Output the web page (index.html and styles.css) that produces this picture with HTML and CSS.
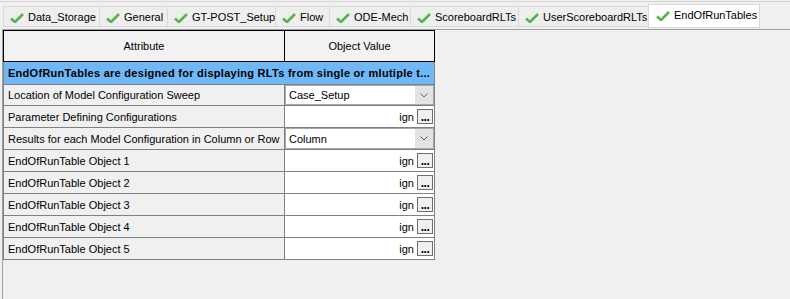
FILE: index.html
```html
<!DOCTYPE html>
<html>
<head>
<meta charset="utf-8">
<link rel="stylesheet" href="styles.css">
</head>
<body>
<div class="topline"></div>
<div class="tabs">
  <div class="tab" style="width:96px"><svg class="chk" viewBox="0 0 14 10"><path d="M1 5.5 L5 9 L13 1" /></svg><span>Data_Storage</span></div>
  <div class="tab" style="width:68px"><svg class="chk" viewBox="0 0 14 10"><path d="M1 5.5 L5 9 L13 1" /></svg><span>General</span></div>
  <div class="tab" style="width:108px"><svg class="chk" viewBox="0 0 14 10"><path d="M1 5.5 L5 9 L13 1" /></svg><span>GT-POST_Setup</span></div>
  <div class="tab" style="width:54px"><svg class="chk" viewBox="0 0 14 10"><path d="M1 5.5 L5 9 L13 1" /></svg><span>Flow</span></div>
  <div class="tab" style="width:81px"><svg class="chk" viewBox="0 0 14 10"><path d="M1 5.5 L5 9 L13 1" /></svg><span>ODE-Mech</span></div>
  <div class="tab" style="width:108px"><svg class="chk" viewBox="0 0 14 10"><path d="M1 5.5 L5 9 L13 1" /></svg><span>ScoreboardRLTs</span></div>
  <div class="tab" style="width:130px"><svg class="chk" viewBox="0 0 14 10"><path d="M1 5.5 L5 9 L13 1" /></svg><span>UserScoreboardRLTs</span></div>
  <div class="tab active" style="width:112px"><svg class="chk" viewBox="0 0 14 10"><path d="M1 5.5 L5 9 L13 1" /></svg><span>EndOfRunTables</span></div>
</div>
<div class="panel">
  <div class="table">
    <div class="hrow">
      <div class="hcell c1">Attribute</div>
      <div class="hcell c2">Object Value</div>
    </div>
    <div class="brow">EndOfRunTables are designed for displaying RLTs from single or mlutiple t...</div>
    <div class="row">
      <div class="cell c1">Location of Model Configuration Sweep</div>
      <div class="cell c2 val"><div class="combo"><span class="ctext">Case_Setup</span><span class="arrow"><svg viewBox="0 0 8 5"><path d="M0.5 0.5 L4 4 L7.5 0.5"/></svg></span></div></div>
    </div>
    <div class="row">
      <div class="cell c1">Parameter Defining Configurations</div>
      <div class="cell c2 val ign"><span class="igntext">ign</span><span class="dots">...</span></div>
    </div>
    <div class="row">
      <div class="cell c1">Results for each Model Configuration in Column or Row</div>
      <div class="cell c2 val"><div class="combo"><span class="ctext">Column</span><span class="arrow"><svg viewBox="0 0 8 5"><path d="M0.5 0.5 L4 4 L7.5 0.5"/></svg></span></div></div>
    </div>
    <div class="row">
      <div class="cell c1">EndOfRunTable Object 1</div>
      <div class="cell c2 val ign"><span class="igntext">ign</span><span class="dots">...</span></div>
    </div>
    <div class="row">
      <div class="cell c1">EndOfRunTable Object 2</div>
      <div class="cell c2 val ign"><span class="igntext">ign</span><span class="dots">...</span></div>
    </div>
    <div class="row">
      <div class="cell c1">EndOfRunTable Object 3</div>
      <div class="cell c2 val ign"><span class="igntext">ign</span><span class="dots">...</span></div>
    </div>
    <div class="row">
      <div class="cell c1">EndOfRunTable Object 4</div>
      <div class="cell c2 val ign"><span class="igntext">ign</span><span class="dots">...</span></div>
    </div>
    <div class="row">
      <div class="cell c1">EndOfRunTable Object 5</div>
      <div class="cell c2 val ign"><span class="igntext">ign</span><span class="dots">...</span></div>
    </div>
  </div>
</div>
</body>
</html>
```
FILE: styles.css
```css
html, body {
  margin: 0;
  padding: 0;
  background: #f0f0f0;
  width: 790px;
  height: 299px;
  overflow: hidden;
  font-family: "Liberation Sans", sans-serif;
  font-size: 11px;
  color: #000;
}
.topline {
  height: 1px;
  margin-top: 1px;
  background: #d4d4d4;
}
.tabs {
  display: flex;
  align-items: flex-end;
  height: 25px;
  padding-left: 3px;
  margin-top: 2px;
  box-sizing: border-box;
}
.tab {
  box-sizing: border-box;
  height: 21px;
  margin-bottom: 2px;
  border: 1px solid #d9d9d9;
  border-right: none;
  background: #eeeeee;
  display: flex;
  align-items: center;
  padding-left: 6px;
  white-space: nowrap;
  font-size: 11px;
  flex: none;
}
.tab.active {
  height: 24px;
  margin-bottom: 1px;
  background: #ffffff;
  border: 1px solid #d9d9d9;
  padding-bottom: 2px;
  padding-left: 7px;
}
.chk {
  width: 14px;
  height: 10px;
  margin-right: 4px;
  margin-top: 2px;
  flex: none;
}
.chk path {
  fill: none;
  stroke: #53b746;
  stroke-width: 2.6;
}
.panel {
  border-top: 1px solid #a0a0a0;
  border-left: 1px solid #a0a0a0;
  margin-left: 2px;
  height: 270px;
}
.table {
  width: 432px;
  font-size: 11px;
}
.hrow {
  display: flex;
  height: 32px;
  box-sizing: border-box;
  border: 1px solid #000;
  background: #f2f2f2;
}
.hcell {
  display: flex;
  align-items: center;
  justify-content: center;
  box-sizing: border-box;
}
.c1 { width: 281px; flex: none; }
.c2 { flex: 1; }
.hcell.c1 { border-right: 1px solid #000; }
.brow {
  height: 22px;
  box-sizing: border-box;
  background: #6fb7f6;
  font-weight: bold;
  display: flex;
  align-items: center;
  padding-left: 4px;
  border-left: 1px solid #808080;
  border-right: 1px solid #808080;
  white-space: nowrap;
  overflow: hidden;
  letter-spacing: 0.28px;
}
.row {
  display: flex;
  height: 22px;
  box-sizing: border-box;
  border: 1px solid #808080;
  border-top: none;
}
.brow + .row { border-top: 1px solid #808080; }
.cell {
  box-sizing: border-box;
  display: flex;
  align-items: center;
}
.cell.c1 {
  background: #f0f0f0;
  padding-left: 4px;
  border-right: 1px solid #808080;
  white-space: nowrap;
  overflow: hidden;
}
.cell.val {
  background: #ffffff;
}
.combo {
  width: 100%;
  height: 100%;
  box-sizing: border-box;
  border: 1px solid #a8a8a8;
  display: flex;
  align-items: center;
}
.ctext {
  flex: 1;
  padding-left: 3px;
}
.arrow {
  width: 18px;
  height: 100%;
  background: #e3e3e3;
  display: flex;
  align-items: center;
  justify-content: center;
}
.arrow svg {
  width: 8px;
  height: 5px;
}
.arrow path {
  fill: none;
  stroke: #606060;
  stroke-width: 1;
}
.ign {
  justify-content: flex-end;
  padding-right: 1px;
}
.igntext {
  margin-right: 3px;
}
.dots {
  width: 16px;
  height: 15px;
  box-sizing: border-box;
  border: 1px solid #707070;
  background: #f0f0f0;
  font-weight: bold;
  font-size: 12px;
  display: flex;
  justify-content: center;
  align-items: flex-end;
  line-height: 12px;
  letter-spacing: -0.5px;
}
```
